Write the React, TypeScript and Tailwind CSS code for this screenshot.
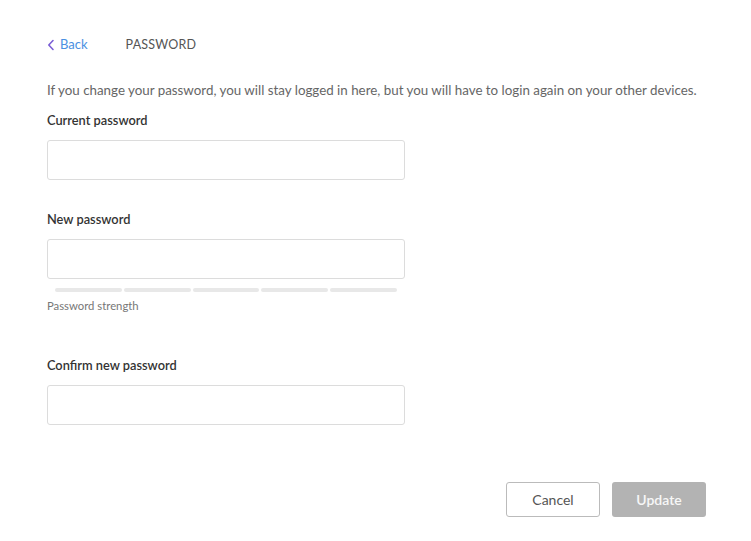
import { FC } from "react";

const Field: FC<{ label: string }> = ({ label }) => (
    <div>
        <label className="block text-[12.8px] font-semibold text-[#333] leading-[18px] mb-[11px]">{label}</label>
        <input type="password" className="block w-[358px] h-[40px] border border-[#dcdcdc] rounded-[3px] bg-white px-3 outline-none" />
    </div>
);

const App: FC = () => {
    return (
        <div className="min-h-[541px] bg-white px-[47px] pt-[36px] font-['Lato',sans-serif] text-[#555]">
            <div className="flex items-center h-[18px]">
                <button className="flex items-center gap-[5px] text-[13px] text-[#4a90e2]">
                    <svg width="8" height="12" viewBox="0 0 8 12" fill="none">
                        <path d="M6 1.5L1.8 6L6 10.5" stroke="#7b5fd6" strokeWidth="1.6" strokeLinecap="round" strokeLinejoin="round" />
                    </svg>
                    Back
                </button>
                <h1 className="ml-[38px] text-[12.5px] text-[#555] tracking-[0.2px]">PASSWORD</h1>
            </div>
            <p className="mt-[27px] text-[13.35px] text-[#666] leading-[18px] whitespace-nowrap">
                If you change your password, you will stay logged in here, but you will have to login again on your other devices.
            </p>
            <div className="mt-[12px]">
                <Field label="Current password" />
            </div>
            <div className="mt-[30px]">
                <Field label="New password" />
                <div className="flex gap-[2px] ml-[8px] mt-[9px] w-[342px]">
                    {[0, 1, 2, 3, 4].map((i) => (
                        <div key={i} className="flex-1 h-[4px] rounded-full bg-[#e8e8e8]" />
                    ))}
                </div>
                <p className="mt-[6px] text-[11.3px] text-[#777] leading-[16px]">Password strength</p>
            </div>
            <div className="mt-[42px]">
                <Field label="Confirm new password" />
            </div>
            <div className="flex justify-end gap-[12px] mt-[57px] mr-[-2px]">
                <button className="w-[94px] h-[35px] border border-[#bbb] rounded-[3px] bg-white text-[14px] text-[#555]">Cancel</button>
                <button className="w-[94px] h-[35px] rounded-[3px] bg-[#b3b3b3] text-[14px] font-semibold text-white/90">Update</button>
            </div>
        </div>
    );
};

export default App;
